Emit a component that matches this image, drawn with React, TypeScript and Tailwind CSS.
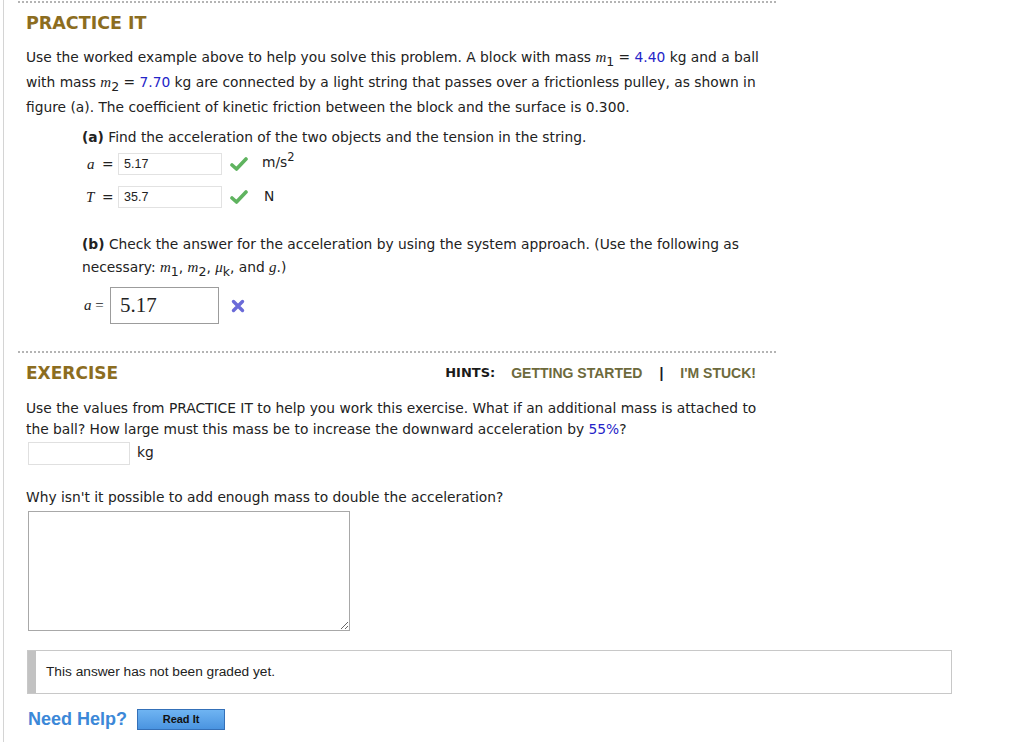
import React from "react";

const M = ({ children }: { children: React.ReactNode }) => (
  <span className="italic text-[15px]" style={{ fontFamily: '"Liberation Serif", serif' }}>
    {children}
  </span>
);

const Sub = ({ children }: { children: React.ReactNode }) => (
  <span className="relative top-[4px] text-[12.5px] leading-none">{children}</span>
);

const Check = () => (
  <svg width="18" height="16" viewBox="0 0 18 16" className="block">
    <path d="M2 9 L6.5 13 L16 3" fill="none" stroke="#5fb35f" strokeWidth="3.6" strokeLinecap="round" strokeLinejoin="round" />
  </svg>
);

const XMark = () => (
  <svg width="14" height="14" viewBox="0 0 14 14" className="block">
    <path d="M2.5 2.5 L11.5 11.5 M11.5 2.5 L2.5 11.5" fill="none" stroke="#6a6ad8" strokeWidth="3.4" strokeLinecap="round" />
  </svg>
);

export default function App() {
  return (
    <div
      className="w-[1024px] h-[742px] overflow-hidden bg-white text-[#222] text-[13.8px]"
      style={{ fontFamily: '"DejaVu Sans", Verdana, sans-serif' }}
    >
      <div className="ml-[3px] h-full border-l border-[#d4d4d4] pl-[14px] pt-[1px]">
        {/* PRACTICE IT */}
        <div className="w-[758px] border-t-2 border-dotted border-[#b4b4b4]" />
        <div className="mt-[10px] pl-[8px] h-[20px] leading-[20px] text-[17.5px] font-bold text-[#8c6d1f]">PRACTICE IT</div>
        <div className="mt-[12px] pl-[8px] leading-[25px]">
          <div className="whitespace-nowrap">
            Use the worked example above to help you solve this problem. A block with mass <M>m</M>
            <Sub>1</Sub> = <span className="text-[#2424c8]">4.40</span> kg and a ball
          </div>
          <div className="whitespace-nowrap">
            with mass <M>m</M>
            <Sub>2</Sub> = <span className="text-[#2424c8]">7.70</span> kg are connected by a light string that passes over a frictionless pulley, as shown in
          </div>
          <div className="whitespace-nowrap">
            figure (a). The coefficient of kinetic friction between the block and the surface is 0.300.
          </div>
        </div>
        <div className="pl-[64px]">
          <div className="mt-[5px] leading-[24px]">
            <b>(a)</b> Find the acceleration of the two objects and the tension in the string.
          </div>
          <div className="mt-[4px] flex items-center h-[22px]">
            <span className="w-[20px] pl-[5px]"><M>a</M></span>
            <span className="w-[16px]">=</span>
            <div className="w-[104px] h-[22px] border border-[#e2e2e2] pl-[5px] leading-[20px] text-[12.5px]" style={{ fontFamily: '"Liberation Sans", Arial, sans-serif' }}>5.17</div>
            <span className="ml-[8px]"><Check /></span>
            <span className="ml-[14px] relative top-[-2px]">m/s<sup className="text-[11.5px]">2</sup></span>
          </div>
          <div className="mt-[11px] flex items-center h-[22px]">
            <span className="w-[20px] pl-[4px]"><M>T</M></span>
            <span className="w-[16px]">=</span>
            <div className="w-[104px] h-[22px] border border-[#e2e2e2] pl-[5px] leading-[20px] text-[12.5px]" style={{ fontFamily: '"Liberation Sans", Arial, sans-serif' }}>35.7</div>
            <span className="ml-[8px]"><Check /></span>
            <span className="ml-[16px] relative top-[-1px]">N</span>
          </div>
          <div className="mt-[25px] leading-[23px]">
            <div className="whitespace-nowrap">
              <b>(b)</b> Check the answer for the acceleration by using the system approach. (Use the following as
            </div>
            <div className="whitespace-nowrap">
              necessary: <M>m</M>
              <Sub>1</Sub>, <M>m</M>
              <Sub>2</Sub>, <M>μ</M>
              <Sub>k</Sub>, and <M>g</M>.)
            </div>
          </div>
          <div className="mt-[8px] flex items-center h-[37px]">
            <span className="w-[28px] pl-[2px] text-[15px] whitespace-nowrap" style={{ fontFamily: '"Liberation Serif", serif' }}>
              <i>a</i> =
            </span>
            <div className="w-[109px] h-[37px] border border-[#9c9c9c] pl-[9px] leading-[35px] text-[21px]" style={{ fontFamily: '"Liberation Serif", serif' }}>5.17</div>
            <span className="ml-[12px]"><XMark /></span>
          </div>
        </div>

        {/* EXERCISE */}
        <div className="mt-[27px] w-[758px] border-t-2 border-dotted border-[#b4b4b4]" />
        <div className="mt-[10px] pl-[8px] w-[738px] h-[20px] flex items-center justify-between">
          <span className="text-[17px] font-bold text-[#8c6d1f] leading-[20px]">EXERCISE</span>
          <span className="flex items-center text-[14px] font-bold" style={{ fontFamily: '"Liberation Sans", Arial, sans-serif' }}>
            <span className="text-[#1a1a1a] text-[13px]" style={{ fontFamily: '"DejaVu Sans", Verdana, sans-serif' }}>HINTS:</span>
            <span className="ml-[16px] text-[#6d6a3c]">GETTING STARTED</span>
            <span className="ml-[17px] text-[#1a1a2a]">|</span>
            <span className="ml-[17px] text-[#6d6a3c]">I'M STUCK!</span>
          </span>
        </div>
        <div className="mt-[15px] pl-[8px] leading-[21px]">
          <div className="whitespace-nowrap">
            Use the values from PRACTICE IT to help you work this exercise. What if an additional mass is attached to
          </div>
          <div className="whitespace-nowrap">
            the ball? How large must this mass be to increase the downward acceleration by <span className="text-[#2424c8]">55%</span>?
          </div>
        </div>
        <div className="mt-[2px] pl-[10px] flex items-center h-[23px]">
          <div className="w-[102px] h-[23px] border border-[#e0e0e0]" />
          <span className="ml-[7px] relative top-[-1px]">kg</span>
        </div>
        <div className="mt-[22px] pl-[8px] leading-[21px] whitespace-nowrap">
          Why isn't it possible to add enough mass to double the acceleration?
        </div>
        <div className="mt-[3px] pl-[10px]">
          <textarea className="block w-[322px] h-[120px] border border-[#a8a8a8] bg-white resize" />
        </div>
        <div className="mt-[19px] ml-[9px] w-[925px] h-[44px] flex border border-[#c8c8c8]">
          <div className="w-[8px] bg-[#c2c2c2]" />
          <div className="pl-[10px] flex items-center text-[13.7px] text-[#222]" style={{ fontFamily: '"Liberation Sans", Arial, sans-serif' }}>
            This answer has not been graded yet.
          </div>
        </div>
        <div className="mt-[13px] ml-[10px] h-[24px] flex items-center" style={{ fontFamily: '"Liberation Sans", Arial, sans-serif' }}>
          <span className="text-[18px] font-bold text-[#3c88d8]">Need Help?</span>
          <button className="ml-[10px] w-[88px] h-[21px] border border-[#3470b8] bg-gradient-to-b from-[#6fb4f2] to-[#4a94e0] text-[11px] font-bold text-[#111] leading-none">
            Read It
          </button>
        </div>
      </div>
    </div>
  );
}
